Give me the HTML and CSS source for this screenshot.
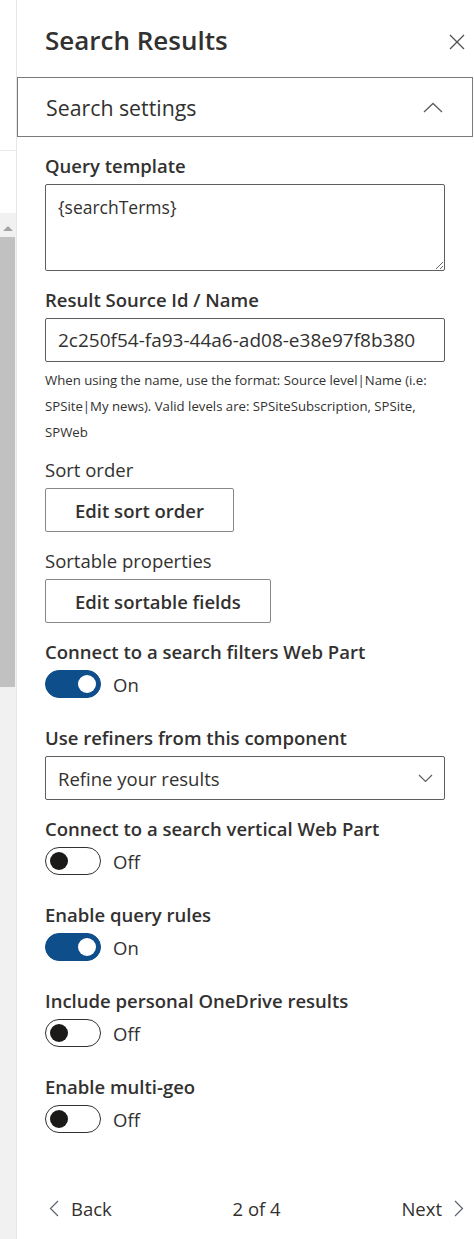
FILE: index.html
```html
<!DOCTYPE html>
<html lang="en">
<head>
  <meta charset="UTF-8">
  <title>Search Results - Settings</title>
  <link rel="stylesheet" href="styles.css">
</head>
<body>
  <div class="page">
    <!-- sliver of the page behind the panel, with its scrollbar -->
    <div class="behind">
      <div class="behind-top"></div>
      <div class="behind-gap"></div>
      <div class="scrollbar">
        <div class="scroll-arrow"></div>
        <div class="scroll-thumb"></div>
      </div>
    </div>

    <aside class="panel">
      <div class="panel-header">
        <h1>Search Results</h1>
        <button class="close-btn" aria-label="Close">
          <svg width="16" height="16" viewBox="0 0 16 16"><path d="M1 1L15 15M15 1L1 15" stroke="#505050" stroke-width="1.3" fill="none"/></svg>
        </button>
      </div>

      <button class="group-header">
        <span>Search settings</span>
        <svg width="20" height="11" viewBox="0 0 20 11"><polyline points="1,10 10,1.5 19,10" stroke="#605e5c" stroke-width="1.3" fill="none"/></svg>
      </button>

      <div class="group-body">
        <div class="field">
          <label>Query template</label>
          <textarea class="text-area">{searchTerms}</textarea>
        </div>

        <div class="field with-note">
          <label>Result Source Id / Name</label>
          <input class="text-input" type="text" value="2c250f54-fa93-44a6-ad08-e38e97f8b380">
          <p class="note">When using the name, use the format: Source level|Name (i.e: SPSite|My news). Valid levels are: SPSiteSubscription, SPSite, SPWeb</p>
        </div>

        <div class="field">
          <label class="plain">Sort order</label>
          <button class="btn">Edit sort order</button>
        </div>

        <div class="field">
          <label class="plain">Sortable properties</label>
          <button class="btn">Edit sortable fields</button>
        </div>

        <div class="field field-toggle">
          <label>Connect to a search filters Web Part</label>
          <div class="toggle-row">
            <span class="toggle on"><span class="thumb"></span></span>
            <span class="toggle-text">On</span>
          </div>
        </div>

        <div class="field">
          <label>Use refiners from this component</label>
          <div class="dropdown">
            <span>Refine your results</span>
            <svg width="15" height="9" viewBox="0 0 15 9"><polyline points="1,1 7.5,7.5 14,1" stroke="#605e5c" stroke-width="1.2" fill="none"/></svg>
          </div>
        </div>

        <div class="field field-toggle">
          <label>Connect to a search vertical Web Part</label>
          <div class="toggle-row">
            <span class="toggle"><span class="thumb"></span></span>
            <span class="toggle-text">Off</span>
          </div>
        </div>

        <div class="field field-toggle">
          <label>Enable query rules</label>
          <div class="toggle-row">
            <span class="toggle on"><span class="thumb"></span></span>
            <span class="toggle-text">On</span>
          </div>
        </div>

        <div class="field field-toggle">
          <label>Include personal OneDrive results</label>
          <div class="toggle-row">
            <span class="toggle"><span class="thumb"></span></span>
            <span class="toggle-text">Off</span>
          </div>
        </div>

        <div class="field field-toggle">
          <label>Enable multi-geo</label>
          <div class="toggle-row">
            <span class="toggle"><span class="thumb"></span></span>
            <span class="toggle-text">Off</span>
          </div>
        </div>
      </div>

      <div class="pager">
        <button class="pager-btn">
          <svg width="10" height="17" viewBox="0 0 10 17"><polyline points="9,1 1.5,8.5 9,16" stroke="#5a6270" stroke-width="1.2" fill="none"/></svg>
          <span>Back</span>
        </button>
        <span class="pager-count">2 of 4</span>
        <button class="pager-btn">
          <span>Next</span>
          <svg width="10" height="17" viewBox="0 0 10 17"><polyline points="1,1 8.5,8.5 1,16" stroke="#5a6270" stroke-width="1.2" fill="none"/></svg>
        </button>
      </div>
    </aside>
  </div>
</body>
</html>
```

FILE: styles.css
```css
body {
  margin: 0;
  background: #fff;
  color: #323130;
  font-family: "Open Sans", "Segoe UI", sans-serif;
  overflow: hidden;
}

button {
  font-family: inherit;
  color: inherit;
  cursor: pointer;
}

.page {
  display: flex;
  height: 1239px;
}

/* Page behind the panel */
.behind {
  width: 16px;
  display: flex;
  flex-direction: column;
  flex-shrink: 0;
}
.behind-top {
  height: 150px;
  border-bottom: 1px solid #e8e8e8;
}
.behind-gap {
  height: 62px;
}
.scrollbar {
  flex: 1;
  background: #f1f1f1;
  padding-right: 1px;
}
.scroll-arrow {
  height: 24px;
  position: relative;
}
.scroll-arrow::after {
  content: "";
  position: absolute;
  left: 3px;
  top: 13px;
  border-left: 5px solid transparent;
  border-right: 5px solid transparent;
  border-bottom: 5px solid #a3a3a3;
}
.scroll-thumb {
  height: 450px;
  background: #c1c1c1;
}

/* Property pane */
.panel {
  flex: 1;
  border-left: 1px solid #e6e6e6;
  display: flex;
  flex-direction: column;
  min-width: 0;
}

.panel-header {
  height: 77px;
  box-sizing: border-box;
  padding: 24px 1px 0 28px;
  display: flex;
  justify-content: space-between;
  align-items: flex-start;
}
.panel-header h1 {
  margin: 0;
  font-size: 26px;
  line-height: 32px;
  font-weight: 600;
}
.close-btn {
  width: 32px;
  height: 32px;
  margin-top: 2px;
  border: none;
  background: none;
  padding: 0;
  display: flex;
  align-items: center;
  justify-content: center;
}

.group-header {
  height: 60px;
  margin: 0 1px 0 0;
  padding: 0 29px 0 28px;
  border: 1px solid #7a7a7a;
  background: #fff;
  display: flex;
  align-items: center;
  justify-content: space-between;
  font-size: 21.3px;
  text-align: left;
}

.group-body {
  padding: 11px 29px 0 28px;
}

.field {
  margin-bottom: 11px;
}
.field.with-note {
  margin-bottom: 7px;
}
.field.field-toggle {
  margin-bottom: 22px;
}

.field label {
  display: block;
  font-size: 18.5px;
  line-height: 26px;
  padding: 5px 0;
  font-weight: 600;
}
.field label.plain {
  font-weight: 400;
}

.text-area,
.text-input {
  display: block;
  width: 100%;
  box-sizing: border-box;
  margin: 0;
  border: 1px solid #605e5c;
  border-radius: 2px;
  font-family: inherit;
  color: #323130;
  outline: none;
}
.text-area {
  height: 87px;
  padding: 9px 12px;
  font-size: 17.5px;
  line-height: 26px;
  resize: vertical;
}
.text-input {
  height: 44px;
  padding: 0 12px;
  font-size: 19px;
}

.note {
  margin: 5px 0 0;
  font-size: 13.2px;
  line-height: 26px;
}

.btn {
  height: 44px;
  padding: 0 29px;
  border: 1px solid #8a8886;
  border-radius: 2px;
  background: #fff;
  font-size: 18.5px;
  font-weight: 600;
}

.dropdown {
  height: 44px;
  box-sizing: border-box;
  border: 1px solid #605e5c;
  border-radius: 2px;
  padding: 0 11px 0 12px;
  display: flex;
  align-items: center;
  justify-content: space-between;
  font-size: 18.5px;
}

/* Toggles */
.toggle-row {
  display: flex;
  align-items: center;
  gap: 12px;
  height: 28px;
}
.toggle {
  width: 56px;
  height: 28px;
  box-sizing: border-box;
  border-radius: 14px;
  border: 1px solid #323130;
  padding: 0 4px;
  display: flex;
  align-items: center;
  background: #fff;
}
.toggle .thumb {
  width: 18px;
  height: 18px;
  border-radius: 50%;
  background: #1b1a19;
}
.toggle.on {
  background: #0e4e8b;
  border-color: #0e4e8b;
  justify-content: flex-end;
}
.toggle.on .thumb {
  background: #fff;
}
.toggle-text {
  font-size: 18.5px;
}

/* Step navigation */
.pager {
  margin-top: auto;
  height: 62px;
  padding: 0 6px 0 28px;
  display: flex;
  align-items: center;
  justify-content: space-between;
}
.pager-btn {
  border: none;
  background: none;
  padding: 0 4px;
  display: flex;
  align-items: center;
  gap: 12px;
  font-size: 18.5px;
}
.pager-count {
  font-size: 18.5px;
}
```
